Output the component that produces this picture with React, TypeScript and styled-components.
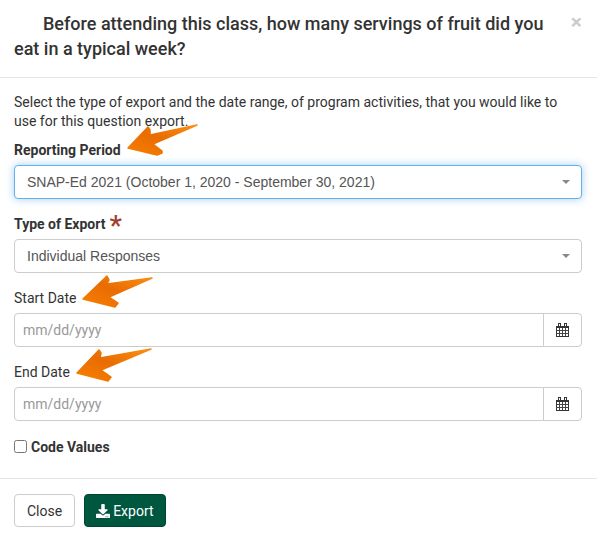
import styled, { createGlobalStyle } from 'styled-components'
import { FaDownload } from 'react-icons/fa'

const GlobalStyle = createGlobalStyle`
  html, body {
    margin: 0;
    padding: 0;
    background: #fff;
  }
  body {
    font-family: Roboto, "Liberation Sans", sans-serif;
    font-size: 14px;
    color: #333;
  }
  * {
    box-sizing: border-box;
  }
`

function CalendarIcon () {
  return (
    <svg width="13" height="14" viewBox="0 0 13 14" shapeRendering="crispEdges" aria-hidden="true">
      <path d="M0.5 3.5h12v10h-12z" fill="#fff" stroke="#333" />
      <path d="M0 3h13v2H0z" fill="#333" />
      <path d="M0 7.5h13M0 10.5h13M3.5 5v8M6.5 5v8M9.5 5v8" stroke="#444" fill="none" />
      <path d="M2.5 0.5h2v3h-2zM8.5 0.5h2v3h-2z" fill="#fff" stroke="#333" />
    </svg>
  )
}

function Arrow ({ x, y, width, height, points }: { x: number, y: number, width: number, height: number, points: string }) {
  return (
    <ArrowSvg $x={x} $y={y} width={width} height={height} viewBox={`0 0 ${width} ${height}`}>
      <defs>
        <linearGradient id={`fill${y}`} x1="0" y1="1" x2="1" y2="0">
          <stop offset="0" stopColor="#f87f00" />
          <stop offset="0.5" stopColor="#e96c02" />
          <stop offset="1" stopColor="#fb8f10" />
        </linearGradient>
      </defs>
      <polygon points={points} fill={`url(#fill${y})`} stroke={`url(#fill${y})`} strokeWidth="1.5" strokeLinejoin="round" />
    </ArrowSvg>
  )
}

export default function App () {
  return (
    <Modal>
      <GlobalStyle />
      <Header>
        <Title>Before attending this class, how many servings of fruit did you eat in a typical week?</Title>
        <CloseX>×</CloseX>
      </Header>
      <Body>
        <Intro>Select the type of export and the date range, of program activities, that you would like to use for this question export.</Intro>
        <Label $bold>Reporting Period</Label>
        <Select $focused>
          <span>SNAP-Ed 2021 (October 1, 2020 - September 30, 2021)</span>
          <Caret />
        </Select>
        <Label $bold $gap={15}>Type of Export <Required>*</Required></Label>
        <Select>
          <span>Individual Responses</span>
          <Caret />
        </Select>
        <Label $gap={15}>Start Date</Label>
        <DateGroup>
          <DateInput readOnly placeholder="mm/dd/yyyy" />
          <CalendarButton><CalendarIcon /></CalendarButton>
        </DateGroup>
        <Label $gap={15}>End Date</Label>
        <DateGroup>
          <DateInput readOnly placeholder="mm/dd/yyyy" />
          <CalendarButton><CalendarIcon /></CalendarButton>
        </DateGroup>
        <CheckRow>
          <CheckBox />
          <span>Code Values</span>
        </CheckRow>
      </Body>
      <Footer>
        <CloseButton>Close</CloseButton>
        <ExportButton><FaDownload size={14} />Export</ExportButton>
      </Footer>
      <Arrow x={126} y={123} width={73} height={34} points="2,25 22,4 24,7 24,12 71,2 27,21 36,28 36,30 31,32" />
      <Arrow x={82} y={275} width={72} height={34} points="1,24 25,1 27,5 25,9 70,3 27,22 36,28 33,32" />
      <Arrow x={76} y={348} width={76} height={35} points="1,25 23,2 25,5 24,10 75,1 25,22 35,29 32,33" />
    </Modal>
  )
}

const Modal = styled.div`
  position: relative;
  width: 597px;
  height: 538px;
  background: #fff;
  overflow: hidden;
`

const Header = styled.header`
  position: relative;
  height: 78px;
  padding: 11px 40px 0 14px;
  border-bottom: 1px solid #e5e5e5;
`

const Title = styled.h4`
  margin: 0;
  font-size: 18px;
  font-weight: 500;
  line-height: 25px;
  text-indent: 29px;
  color: #333;
`

const CloseX = styled.span`
  position: absolute;
  top: 10px;
  right: 15px;
  font-size: 21px;
  font-weight: 700;
  line-height: 24px;
  color: #000;
  opacity: 0.2;
`

const Body = styled.section`
  padding: 15px 15px 0 14px;
  height: 401px;
  border-bottom: 1px solid #e5e5e5;
`

const Intro = styled.p`
  margin: 0 0 9px;
  line-height: 19px;
  color: #333;
`

const Label = styled.div<{ $bold?: boolean, $gap?: number }>`
  display: flex;
  align-items: center;
  gap: 4px;
  height: 20px;
  margin: ${p => p.$gap ?? 0}px 0 5px;
  font-weight: ${p => (p.$bold ? 700 : 400)};
  color: #333;
`

const Required = styled.span`
  font-size: 28px;
  font-weight: 500;
  color: #a0402c;
  line-height: 20px;
  padding-top: 3px;
`

const Select = styled.div<{ $focused?: boolean }>`
  display: flex;
  align-items: center;
  justify-content: space-between;
  height: 34px;
  padding: 0 12px;
  font-family: "Liberation Sans", Arial, sans-serif;
  background: #fff;
  border: 1px solid ${p => (p.$focused ? '#66afe9' : '#ccc')};
  border-radius: 4px;
  color: #555;
  box-shadow: ${p => (p.$focused ? '0 0 8px rgba(102, 175, 233, 0.6)' : 'none')};
`

const Caret = styled.i`
  width: 0;
  height: 0;
  margin-right: -1px;
  border-left: 4px solid transparent;
  border-right: 4px solid transparent;
  border-top: 4px solid #888;
`

const DateGroup = styled.div`
  display: flex;
  height: 34px;
`

const DateInput = styled.input`
  flex: 1;
  min-width: 0;
  padding: 0 8px;
  font: inherit;
  color: #555;
  background: #fff;
  border: 1px solid #ccc;
  border-radius: 4px 0 0 4px;
  outline: none;

  &::placeholder {
    color: #999;
    opacity: 1;
  }
`

const CalendarButton = styled.div`
  display: flex;
  align-items: center;
  justify-content: center;
  width: 39px;
  margin-left: -1px;
  border: 1px solid #ccc;
  border-radius: 0 4px 4px 0;
`

const CheckRow = styled.label`
  display: flex;
  align-items: center;
  gap: 4px;
  margin-top: 16px;
  height: 20px;
  font-weight: 700;
`

const CheckBox = styled.input.attrs({ type: 'checkbox' })`
  width: 13px;
  height: 13px;
  margin: 0 0 1px;
`

const Footer = styled.footer`
  display: flex;
  gap: 9px;
  padding: 15px 14px;
`

const CloseButton = styled.button`
  height: 33px;
  padding: 0 12px;
  font: inherit;
  color: #333;
  background: #fff;
  border: 1px solid #ccc;
  border-radius: 4px;
`

const ExportButton = styled.button`
  display: flex;
  align-items: center;
  gap: 3px;
  height: 33px;
  padding: 0 11px;
  font: inherit;
  color: #fff;
  background: #00573f;
  border: 1px solid #00452f;
  border-radius: 4px;
`

const ArrowSvg = styled.svg<{ $x: number, $y: number }>`
  position: absolute;
  left: ${p => p.$x}px;
  top: ${p => p.$y}px;
`
